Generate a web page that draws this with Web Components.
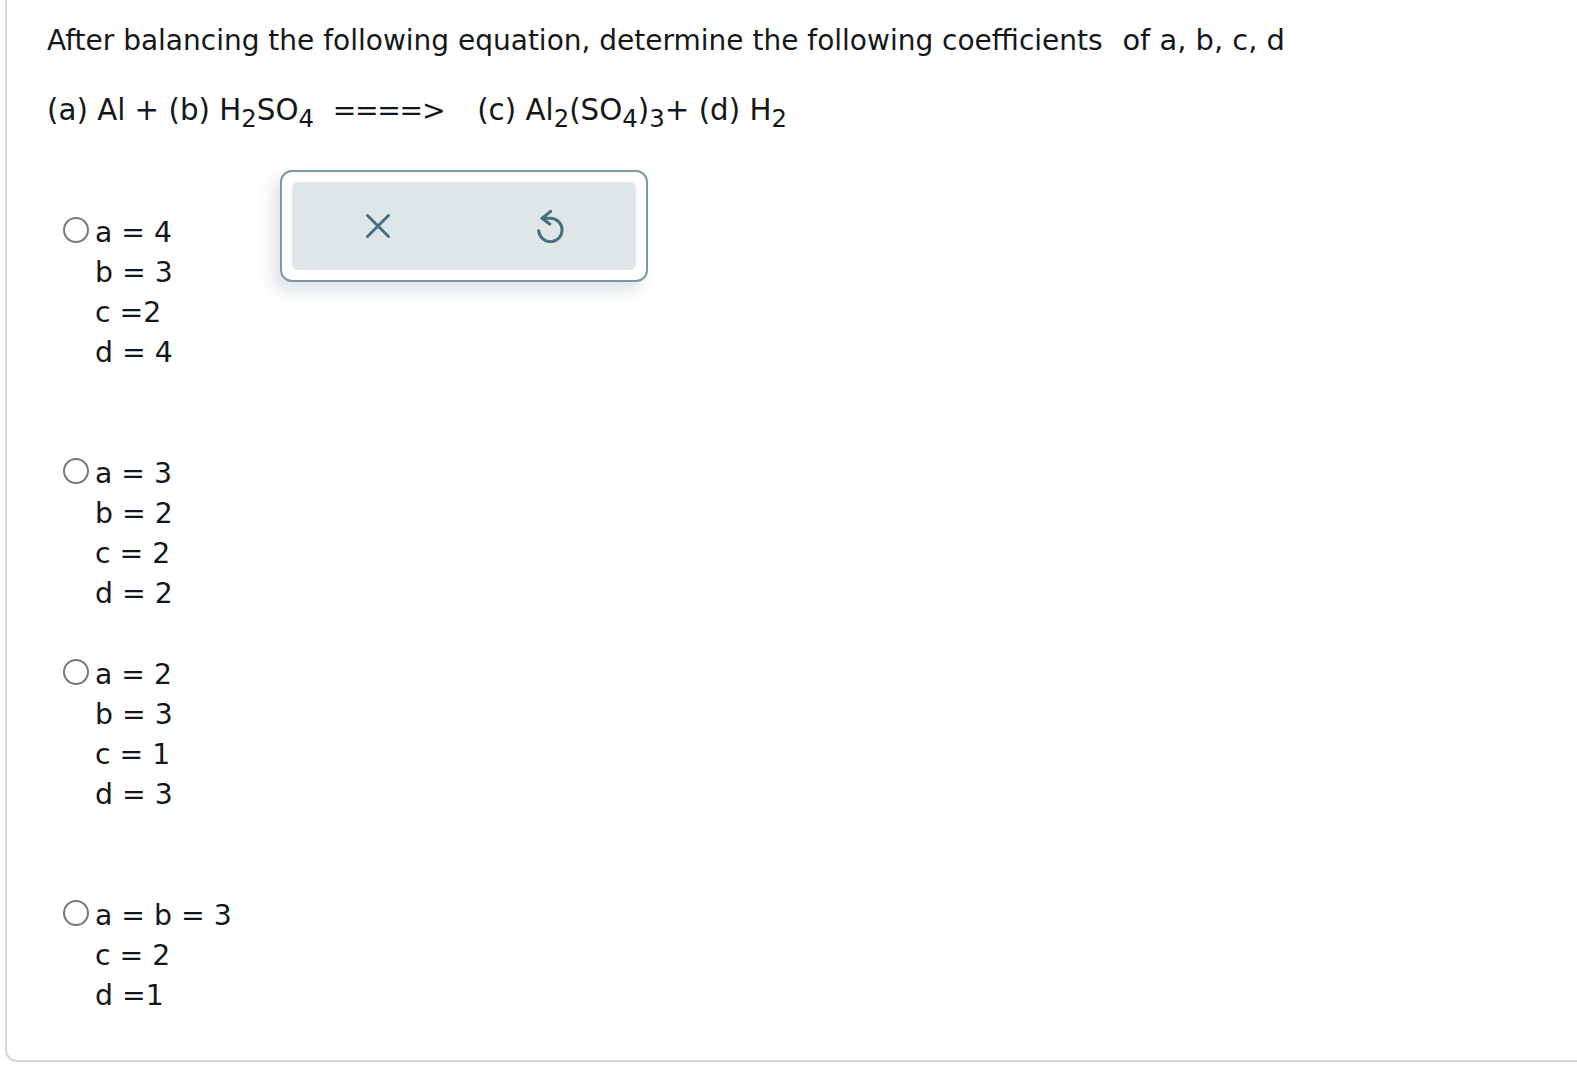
<!DOCTYPE html>
<html lang="en">
<head>
<meta charset="utf-8">
<title>Question</title>
<style>
	html, body { margin: 0; background: #fff; }
	body { font-family: "DejaVu Sans", Verdana, sans-serif; color: #14171a; }
</style>
</head>
<body>
<question-card>
	<span slot="prompt">After balancing the following equation, determine the following coefficients&nbsp; <span style="font-size:28.9px;margin-left:2px">of a, b, c, d</span></span>
	<span slot="equation">(a) Al + (b) H<sub>2</sub>SO<sub>4</sub>&nbsp; <span style="letter-spacing:-1.3px;font-size:28.2px;margin-right:5px">====&gt;</span>&nbsp; &nbsp;(c) Al<sub>2</sub>(SO<sub>4</sub>)<sub>3</sub>+ (d) H<sub>2</sub></span>
	<radio-option gap="81">
		<div>a = 4</div><div>b = 3</div><div>c =2</div><div>d = 4</div>
	</radio-option>
	<radio-option gap="41">
		<div>a = 3</div><div>b = 2</div><div>c = 2</div><div>d = 2</div>
	</radio-option>
	<radio-option gap="81">
		<div>a = 2</div><div>b = 3</div><div>c = 1</div><div>d = 3</div>
	</radio-option>
	<radio-option gap="0">
		<div>a = b = 3</div><div>c = 2</div><div>d =1</div>
	</radio-option>
	<answer-popup slot="popup"></answer-popup>
</question-card>

<script>
const CARD_TEMPLATE = document.createElement('template');
CARD_TEMPLATE.innerHTML = `
	<style>
		:host {
			display: block;
			position: relative;
			box-sizing: border-box;
			height: 1062px;
			margin-left: 5px;
			border-left: 2px solid #d3dadd;
			border-bottom: 2px solid #d3dadd;
			border-bottom-left-radius: 12px;
			padding: 20px 0 0 40px;
			font-size: 28px;
			line-height: 40px;
		}
		.prompt { height: 40px; white-space: nowrap; }
		.equation { height: 40px; margin-top: 30px; white-space: nowrap; font-size: 29.3px; }
		.options { margin-top: 83px; margin-left: 16px; font-size: 28.3px; }
		.popup { position: absolute; left: 273px; top: 170px; }
	</style>
	<div class="prompt"><slot name="prompt"></slot></div>
	<div class="equation"><slot name="equation"></slot></div>
	<div class="options"><slot></slot></div>
	<div class="popup"><slot name="popup"></slot></div>
`;

class QuestionCard extends HTMLElement {
	constructor() {
		super();
		this.attachShadow({ mode: 'open' }).appendChild(CARD_TEMPLATE.content.cloneNode(true));
	}
}

const OPTION_TEMPLATE = document.createElement('template');
OPTION_TEMPLATE.innerHTML = `
	<style>
		:host { display: flex; align-items: flex-start; }
		.radio {
			box-sizing: border-box;
			flex: none;
			width: 26px;
			height: 26px;
			margin: 4px 6px 0 0;
			border: 2px solid #75797c;
			border-radius: 50%;
			background: #fff;
		}
	</style>
	<span class="radio"></span>
	<div class="lines"><slot></slot></div>
`;

class RadioOption extends HTMLElement {
	constructor() {
		super();
		this.attachShadow({ mode: 'open' }).appendChild(OPTION_TEMPLATE.content.cloneNode(true));
	}

	connectedCallback() {
		this.style.paddingBottom = `${this.getAttribute('gap') || 0}px`;
	}
}

const POPUP_TEMPLATE = document.createElement('template');
POPUP_TEMPLATE.innerHTML = `
	<style>
		:host {
			display: block;
			box-sizing: border-box;
			width: 368px;
			height: 112px;
			padding: 10px;
			background: #fff;
			border: 2px solid #7e99a5;
			border-radius: 12px;
			box-shadow: -7px 9px 16px rgba(60, 90, 105, 0.17);
		}
		.inner {
			display: grid;
			grid-template-columns: 1fr 1fr;
			align-items: center;
			justify-items: center;
			height: 100%;
			background: #dfe6e8;
			border-radius: 6px;
		}
		svg { display: block; fill: none; stroke: #44707f; stroke-width: 3; stroke-linecap: round; stroke-linejoin: round; }
	</style>
	<div class="inner">
		<svg width="26" height="26" viewBox="0 0 26 26" aria-label="clear">
			<path d="M2.5 2.5 L23.5 23.5 M23.5 2.5 L2.5 23.5"/>
		</svg>
		<svg width="27" height="33" viewBox="0 0 27 33" aria-label="undo">
			<path d="M1.7 20.7 A11.7 11.7 0 1 0 13.3 8.3 L5 8.3"/>
			<path d="M13.7 1.3 L5 8.3 L12.7 14"/>
		</svg>
	</div>
`;

class AnswerPopup extends HTMLElement {
	constructor() {
		super();
		this.attachShadow({ mode: 'open' }).appendChild(POPUP_TEMPLATE.content.cloneNode(true));
	}
}

customElements.define('question-card', QuestionCard);
customElements.define('radio-option', RadioOption);
customElements.define('answer-popup', AnswerPopup);
</script>
</body>
</html>
